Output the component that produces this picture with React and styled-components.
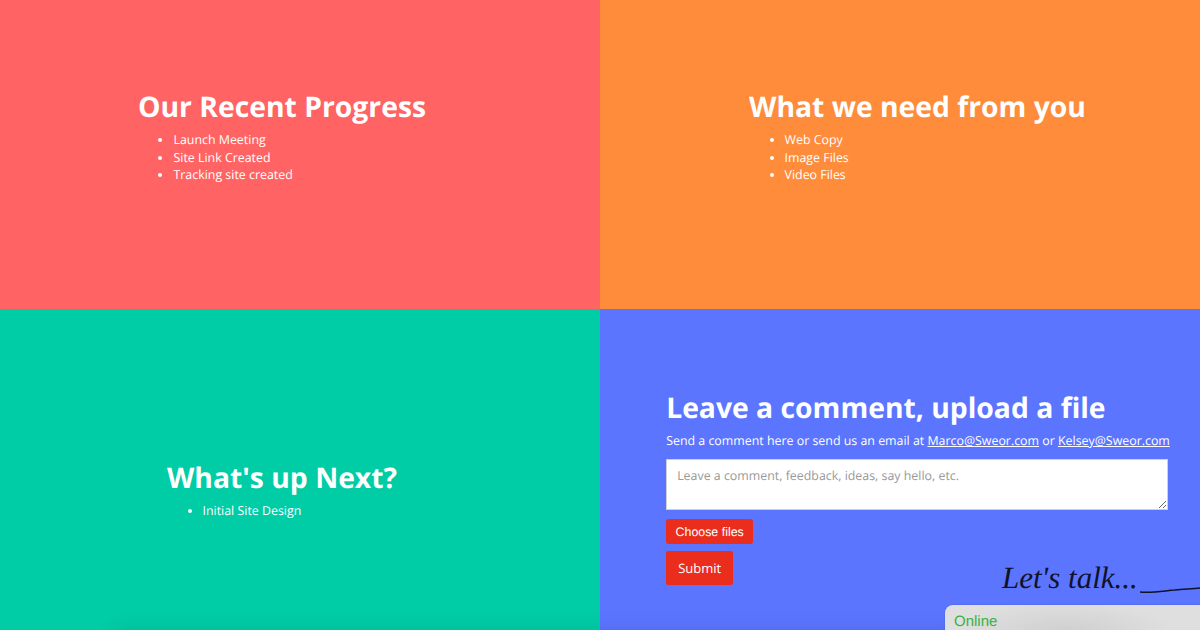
import React from 'react';
import styled, { createGlobalStyle } from 'styled-components';

const Global = createGlobalStyle`
    html, body {
        margin: 0;
        height: 100%;
        overflow: hidden;
    }
    body {
        font-family: "Open Sans", "Liberation Sans", sans-serif;
        color: white;
        text-rendering: geometricPrecision;
    }
`

const Page = styled.div`
    position: relative;
    width: 1200px;
    height: 630px;
    overflow: hidden;
`

const Grid = styled.div`
    display: grid;
    grid-template-columns: 600px 600px;
    grid-template-rows: 309px 360px;
`

const Panel = styled.section`
    display: flex;
    justify-content: center;
    align-items: center;
    box-sizing: border-box;
    background: ${p => p.$bg};
    padding: ${p => p.$pad};
`

const Block = styled.div`
    width: max-content;
`

const Title = styled.h2`
    margin: 0 0 5px;
    font-size: 28.3px;
    line-height: 38px;
    font-weight: 700;
    color: white;
`

const List = styled.ul`
    margin: 0;
    padding-left: 35.5px;
    font-size: 12.4px;
    line-height: 17.7px;
`

const Intro = styled.p`
    margin: 0 0 10px;
    font-size: 12.4px;
    line-height: 17px;
    a {
        color: white;
        text-decoration: underline;
    }
`

const Comment = styled.textarea`
    display: block;
    box-sizing: border-box;
    width: 502px;
    height: 51px;
    padding: 7px 10px;
    margin: 0 0 9px;
    border: 1px solid #d0d0d0;
    background: white;
    font-family: "Open Sans", sans-serif;
    font-size: 12.4px;
    line-height: 17px;
    text-rendering: geometricPrecision;
    outline: none;
    &::placeholder {
        color: #999;
    }
`

const Choose = styled.button`
    display: block;
    height: 25px;
    width: 87px;
    padding: 0;
    margin: 0 0 7px;
    border: 0;
    border-radius: 3px;
    background: #eb2d1e;
    color: white;
    font-family: "Liberation Sans", Arial, sans-serif;
    font-size: 12.4px;
    text-rendering: geometricPrecision;
`

const Submit = styled.button`
    display: block;
    height: 34px;
    width: 67px;
    padding: 0;
    border: 0;
    border-radius: 2px;
    background: #eb2d1e;
    color: white;
    font-family: "Open Sans", sans-serif;
    font-size: 13px;
    text-rendering: geometricPrecision;
`

const Chat = styled.div`
    position: absolute;
    left: 945px;
    top: 605px;
    width: 300px;
    height: 60px;
    box-sizing: border-box;
    padding: 8px 9px;
    border-radius: 8px 0 0 0;
    background: radial-gradient(ellipse 110px 30px at 40% 45%, #cfcfcf 0%, #dfdfdf 100%);
    box-shadow: 0 0 2px rgba(0, 0, 0, 0.2);
    color: #37b341;
    font-family: "Liberation Sans", Arial, sans-serif;
    font-size: 15px;
    line-height: 18px;
`

const Talk = styled.div`
    position: absolute;
    left: 1002px;
    top: 556px;
    width: 198px;
    height: 44px;
    color: #10122a;
    font-family: "Liberation Serif", serif;
    font-style: italic;
    font-size: 31px;
    line-height: 44px;
    white-space: nowrap;
`

const Swoosh = styled.svg`
    position: absolute;
    left: 137px;
    top: 28px;
`

const BottomShade = styled.div`
    position: absolute;
    left: 120px;
    right: 100px;
    top: 636px;
    height: 10px;
    box-shadow: 0 0 20px 6px rgba(0, 0, 0, 0.1);
`

const App = () => (
    <Page>
        <Global />
        <Grid>
            <Panel $bg="#ff6363" $pad="0 36px 37px 0">
                <Block>
                    <Title>Our Recent Progress</Title>
                    <List>
                        <li>Launch Meeting</li>
                        <li>Site Link Created</li>
                        <li>Tracking site created</li>
                    </List>
                </Block>
            </Panel>
            <Panel $bg="#ff8c3a" $pad="0 0 37px 35px">
                <Block>
                    <Title>What we need from you</Title>
                    <List>
                        <li>Web Copy</li>
                        <li>Image Files</li>
                        <li>Video Files</li>
                    </List>
                </Block>
            </Panel>
            <Panel $bg="#00cca6" $pad="0 36px 0 0">
                <Block>
                    <Title>What's up Next?</Title>
                    <List>
                        <li>Initial Site Design</li>
                    </List>
                </Block>
            </Panel>
            <Panel $bg="#5b75ff" $pad="0 0 4px 36px">
                <Block>
                    <Title>Leave a comment, upload a file</Title>
                    <Intro>
                        Send a comment here or send us an email at <a href="#">Marco@Sweor.com</a> or <a href="#">Kelsey@Sweor.com</a>
                    </Intro>
                    <Comment placeholder="Leave a comment, feedback, ideas, say hello, etc." />
                    <Choose>Choose files</Choose>
                    <Submit>Submit</Submit>
                </Block>
            </Panel>
        </Grid>
        <BottomShade />
        <Talk>
            Let's talk...
            <Swoosh width="61" height="12" viewBox="0 0 61 12">
                <path d="M1 8 C 14 9, 24 7, 36 6 C 45 5, 53 5, 61 4" fill="none" stroke="#10122a" strokeWidth="1.6" />
            </Swoosh>
        </Talk>
        <Chat>Online</Chat>
    </Page>
);

export default App
